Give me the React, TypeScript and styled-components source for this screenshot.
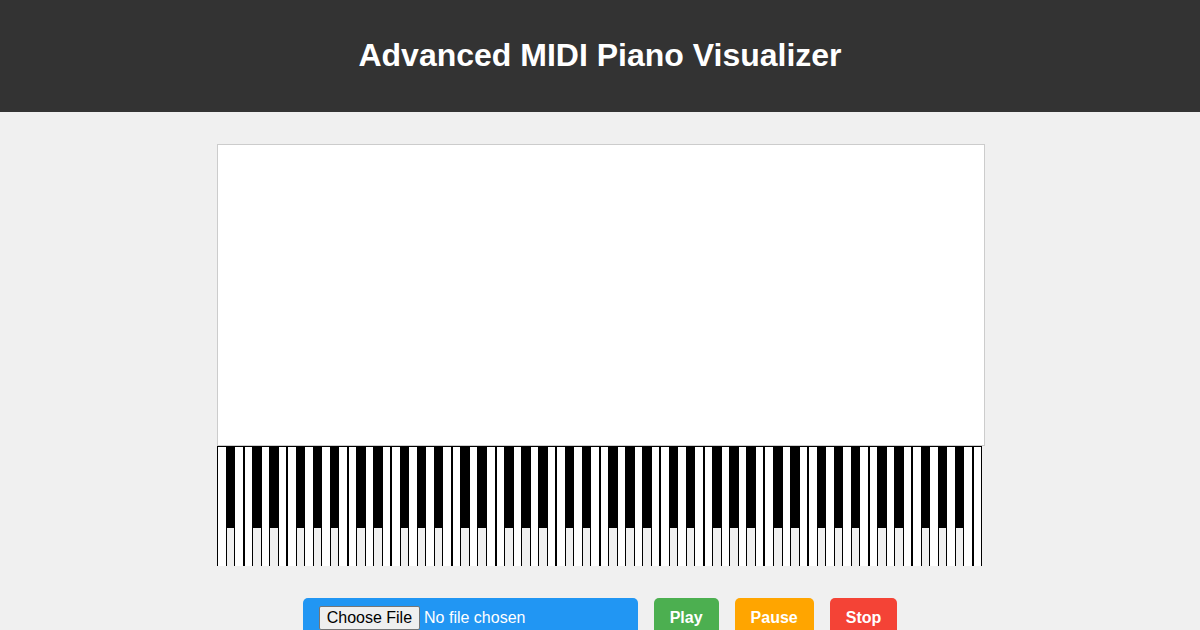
import React from "react";
import styled, { createGlobalStyle } from "styled-components";

const GlobalStyle = createGlobalStyle`
  html, body { margin: 0; padding: 0; }
  body {
    background: #f0f0f0;
    font-family: "Liberation Sans", Arial, Helvetica, sans-serif;
    overflow: hidden;
  }
`;

const Header = styled.header`
  background: #333333;
  color: #ffffff;
  padding: 16px;
  text-align: center;
`;

const Title = styled.h1`
  margin: 21.44px 0;
  font-size: 32px;
  font-weight: bold;
  line-height: 37px;
`;

const Main = styled.main`
  display: flex;
  flex-direction: column;
  align-items: center;
  padding-top: 32px;
`;

const Stage = styled.div`
  width: 768px;
  margin-left: 2px;
  display: flex;
  flex-direction: column;
`;

const Canvas = styled.canvas`
  display: block;
  width: 766px;
  height: 300px;
  background: #ffffff;
  border: 1px solid #cccccc;
`;

const Piano = styled.div`
  display: flex;
  align-items: flex-start;
  width: 766px;
  height: 120px;
`;

const Key = styled.div<{ $black: boolean }>`
  flex: 1 1 0;
  min-width: 0;
  box-sizing: border-box;
  height: ${(p) => (p.$black ? "82px" : "120px")};
  background: ${(p) => (p.$black ? "#000000" : "#ffffff")};
  border: ${(p) => (p.$black ? "none" : "1px solid #000000")};
  border-bottom: none;
`;

const Controls = styled.div`
  display: flex;
  justify-content: center;
  align-items: flex-start;
  gap: 16px;
  margin-top: 32px;
`;

const FileInput = styled.input`
  box-sizing: border-box;
  width: 335px;
  padding: 8px 16px;
  background: #2196f3;
  color: #ffffff;
  border: none;
  border-radius: 5px;
  font-family: "Liberation Sans", Arial, sans-serif;
  font-size: 16px;
  &::file-selector-button {
    font-family: "Liberation Sans", Arial, sans-serif;
    font-size: 16px;
    color: #000000;
    background: #efefef;
    border: 1px solid #767676;
    border-radius: 2px;
    padding: 2px 7px;
    margin-right: 4px;
  }
`;

const Button = styled.button<{ $color: string }>`
  background: ${(p) => p.$color};
  color: #ffffff;
  border: none;
  border-radius: 5px;
  padding: 10px 16px;
  font-family: "Liberation Sans", Arial, sans-serif;
  font-size: 16px;
  font-weight: bold;
  line-height: 20px;
  cursor: pointer;
`;

// A-based pattern: A, A#, B, C, C#, D, D#, E, F, F#, G, G#
const blackPattern = [false, true, false, false, true, false, true, false, false, true, false, true];

// 88 keys starting at A0
const keys = Array.from({ length: 88 }, (_, i) => blackPattern[i % 12]);

export default function App() {
  return (
    <>
      <GlobalStyle />
      <Header>
        <Title>Advanced MIDI Piano Visualizer</Title>
      </Header>
      <Main>
        <Stage>
          <Canvas width={766} height={300} />
          <Piano>
            {keys.map((b, i) => (
              <Key key={i} $black={b} />
            ))}
          </Piano>
        </Stage>
        <Controls>
          <FileInput type="file" accept=".mid,.midi" />
          <Button $color="#4caf50">Play</Button>
          <Button $color="#ffa500">Pause</Button>
          <Button $color="#f44336">Stop</Button>
        </Controls>
      </Main>
    </>
  );
}
